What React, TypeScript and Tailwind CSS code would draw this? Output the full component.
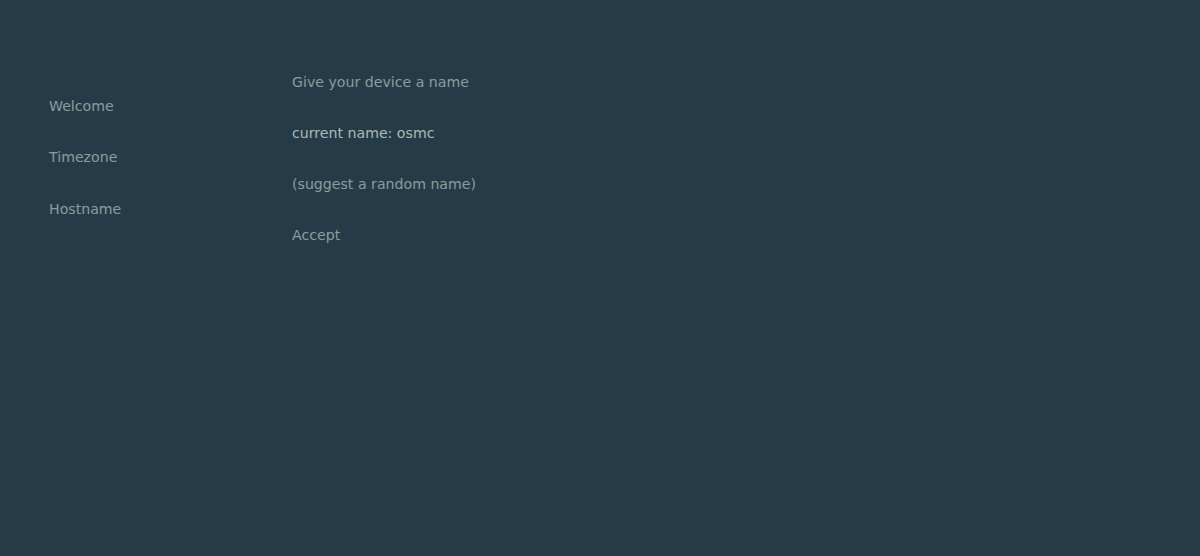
import React from "react";

export default function App() {
  return (
    <div
      className="w-[1200px] h-[556px] bg-[#253c48] flex text-[14.15px] text-[#8d9c9e]"
      style={{ fontFamily: '"DejaVu Sans", sans-serif' }}
    >
      <div className="w-[292px] pl-[49px] pt-[96px] flex flex-col gap-[31.3px] leading-[20px]">
        <div>Welcome</div>
        <div>Timezone</div>
        <div>Hostname</div>
      </div>
      <div className="pt-[71.5px] flex flex-col gap-[31.3px] leading-[20px]">
        <div>Give your device a name</div>
        <div className="text-[#b0b9b6]">current name: osmc</div>
        <div>(suggest a random name)</div>
        <div>Accept</div>
      </div>
    </div>
  );
}
